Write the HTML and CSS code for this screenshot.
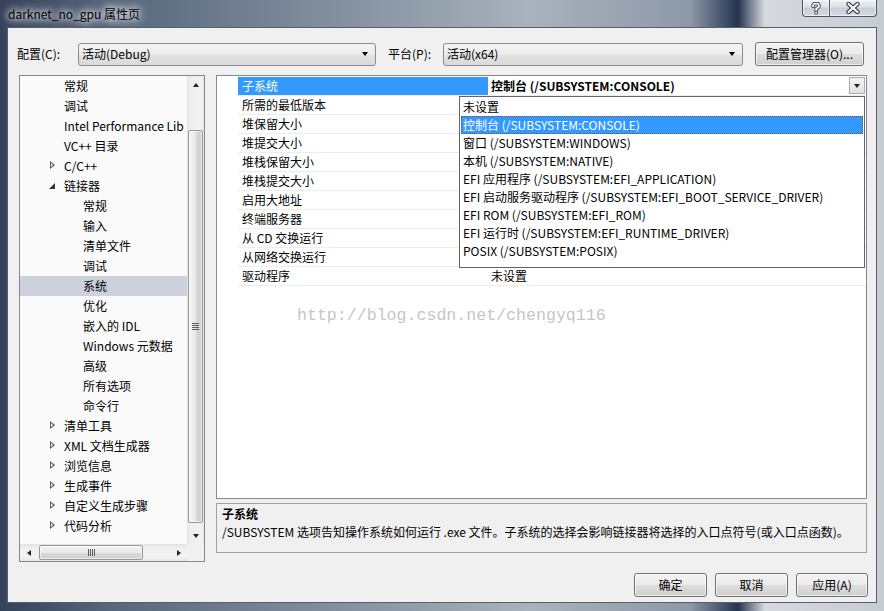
FILE: index.html
```html
<!DOCTYPE html>
<html lang="zh-CN">
<head>
<meta charset="utf-8">
<title>darknet_no_gpu 属性页</title>
<link rel="stylesheet" href="styles.css">
</head>
<body>
<div class="window">
  <div class="titlebar">
    <span class="title">darknet_no_gpu 属性页</span>
    <div class="caption-buttons">
      <button class="cap cap-help" aria-label="帮助">
        <svg width="12" height="13" viewBox="0 0 12 13">
          <path d="M3 4.2 Q3 1.5 6 1.5 Q9 1.5 9 4 Q9 5.6 6.2 6.6 V8.2" fill="none" stroke="#3b4654" stroke-width="3.6" stroke-linecap="round"/>
          <rect x="4.4" y="9.2" width="3.6" height="3.2" rx="0.6" fill="#3b4654"/>
          <path d="M3 4.2 Q3 1.5 6 1.5 Q9 1.5 9 4 Q9 5.6 6.2 6.6 V8.2" fill="none" stroke="#fff" stroke-width="1.7" stroke-linecap="round"/>
          <rect x="5.2" y="10" width="2" height="1.6" fill="#fff"/>
        </svg>
      </button>
      <button class="cap cap-close" aria-label="关闭">
        <svg width="14" height="12" viewBox="0 0 14 12">
          <path d="M2.5 2 L11.5 10 M11.5 2 L2.5 10" stroke="#3b4654" stroke-width="4.4" stroke-linecap="round"/>
          <path d="M2.5 2 L11.5 10 M11.5 2 L2.5 10" stroke="#fff" stroke-width="2.2" stroke-linecap="round"/>
        </svg>
      </button>
    </div>
  </div>

  <div class="client">
    <div class="toolbar">
      <label class="lbl lbl-config">配置(C):</label>
      <div class="combo combo-config"><span class="combo-text">活动(Debug)</span><span class="combo-arrow"></span></div>
      <label class="lbl lbl-platform">平台(P):</label>
      <div class="combo combo-platform"><span class="combo-text">活动(x64)</span><span class="combo-arrow"></span></div>
      <button class="btn btn-manager">配置管理器(O)...</button>
    </div>

    <div class="main">
      <div class="tree">
        <div class="tree-top">
          <ul class="tree-list">
            <li class="node l1"><span class="tw"></span>常规</li>
            <li class="node l1"><span class="tw"></span>调试</li>
            <li class="node l1"><span class="tw"></span>Intel Performance Lib</li>
            <li class="node l1"><span class="tw"></span>VC++ 目录</li>
            <li class="node l1"><span class="tw closed"></span>C/C++</li>
            <li class="node l1"><span class="tw open"></span>链接器</li>
            <li class="node l2">常规</li>
            <li class="node l2">输入</li>
            <li class="node l2">清单文件</li>
            <li class="node l2">调试</li>
            <li class="node l2 selected">系统</li>
            <li class="node l2">优化</li>
            <li class="node l2">嵌入的 IDL</li>
            <li class="node l2">Windows 元数据</li>
            <li class="node l2">高级</li>
            <li class="node l2">所有选项</li>
            <li class="node l2">命令行</li>
            <li class="node l1"><span class="tw closed"></span>清单工具</li>
            <li class="node l1"><span class="tw closed"></span>XML 文档生成器</li>
            <li class="node l1"><span class="tw closed"></span>浏览信息</li>
            <li class="node l1"><span class="tw closed"></span>生成事件</li>
            <li class="node l1"><span class="tw closed"></span>自定义生成步骤</li>
            <li class="node l1"><span class="tw closed"></span>代码分析</li>
          </ul>
          <div class="vscroll">
            <div class="sb-arrow"><span class="arr arr-up"></span></div>
            <div class="vtrack"><div class="vthumb"><span class="grip-h"></span></div></div>
            <div class="sb-arrow"><span class="arr arr-down"></span></div>
          </div>
        </div>
        <div class="tree-bottom">
          <div class="hscroll">
            <div class="sb-arrow-h"><span class="arr arr-left"></span></div>
            <div class="htrack"><div class="hthumb"><span class="grip-v"></span></div></div>
            <div class="sb-arrow-h"><span class="arr arr-right"></span></div>
          </div>
          <div class="sb-corner"></div>
        </div>
      </div>

      <div class="right">
        <div class="grid">
          <div class="prow active"><div class="pname">子系统</div><div class="pval strong"><span class="pval-text">控制台 (/SUBSYSTEM:CONSOLE)</span><span class="ddbtn"><span class="arr arr-down"></span></span></div></div>
          <div class="prow"><div class="pname">所需的最低版本</div><div class="pval"></div></div>
          <div class="prow"><div class="pname">堆保留大小</div><div class="pval"></div></div>
          <div class="prow"><div class="pname">堆提交大小</div><div class="pval"></div></div>
          <div class="prow"><div class="pname">堆栈保留大小</div><div class="pval"></div></div>
          <div class="prow"><div class="pname">堆栈提交大小</div><div class="pval"></div></div>
          <div class="prow"><div class="pname">启用大地址</div><div class="pval"></div></div>
          <div class="prow"><div class="pname">终端服务器</div><div class="pval"></div></div>
          <div class="prow"><div class="pname">从 CD 交换运行</div><div class="pval"></div></div>
          <div class="prow"><div class="pname">从网络交换运行</div><div class="pval"></div></div>
          <div class="prow"><div class="pname">驱动程序</div><div class="pval">未设置</div></div>

          <ul class="dropdown">
            <li>未设置</li>
            <li class="hl">控制台 (/SUBSYSTEM:CONSOLE)</li>
            <li>窗口 (/SUBSYSTEM:WINDOWS)</li>
            <li>本机 (/SUBSYSTEM:NATIVE)</li>
            <li>EFI 应用程序 (/SUBSYSTEM:EFI_APPLICATION)</li>
            <li>EFI 启动服务驱动程序 (/SUBSYSTEM:EFI_BOOT_SERVICE_DRIVER)</li>
            <li>EFI ROM (/SUBSYSTEM:EFI_ROM)</li>
            <li>EFI 运行时 (/SUBSYSTEM:EFI_RUNTIME_DRIVER)</li>
            <li>POSIX (/SUBSYSTEM:POSIX)</li>
          </ul>
        </div>
        <div class="desc">
          <div class="desc-title">子系统</div>
          <div class="desc-text">/SUBSYSTEM 选项告知操作系统如何运行 .exe 文件。子系统的选择会影响链接器将选择的入口点符号(或入口点函数)。</div>
        </div>
      </div>
    </div>

    <div class="footer">
      <button class="btn btn-ok">确定</button>
      <button class="btn btn-cancel">取消</button>
      <button class="btn btn-apply">应用(A)</button>
    </div>
  </div>

  <div class="watermark">http://blog.csdn.net/chengyq116</div>
</div>
</body>
</html>
```

FILE: styles.css
```css
* { box-sizing: border-box; }

html, body {
  margin: 0;
  padding: 0;
}

body {
  width: 884px;
  height: 611px;
  overflow: hidden;
  font-family: "Noto Sans CJK SC", "Noto Sans", sans-serif;
  font-size: 12px;
  color: #000;
}

ul { list-style: none; margin: 0; padding: 0; }
button { font: inherit; color: inherit; }

/* ---- glass frame ---- */
.window {
  position: relative;
  width: 884px;
  height: 611px;
  display: flex;
  flex-direction: column;
  background:
    linear-gradient(to right, #34425a 0, #56657a 12%, #7e8b9b 35%, #a9b2bd 60%, #8e99a8 78%, #25344f 83.5%, #d6d9dd 86.5%, #c7ccd3 100%);
}

.titlebar {
  height: 27px;
  flex: none;
  display: flex;
  align-items: flex-start;
  padding-left: 8px;
}

.title {
  line-height: 27px;
  color: #000;
  text-shadow: 0 0 6px #fff, 0 0 10px rgba(255,255,255,0.9), 0 0 14px rgba(255,255,255,0.7);
}

.caption-buttons {
  margin-left: auto;
  margin-right: 7px;
  display: flex;
}

.cap {
  height: 17px;
  padding: 0;
  border: 1px solid #4b5767;
  border-top: none;
  background: linear-gradient(#eef0f3, #dcdfe4 45%, #c9ced6 50%, #d6dae0);
  display: flex;
  align-items: center;
  justify-content: center;
  box-shadow: inset 0 0 0 1px rgba(255,255,255,0.55);
}
.cap-help { width: 28px; border-radius: 0 0 0 4px; }
.cap-close { width: 47px; border-left: none; border-radius: 0 0 4px 0; }

/* ---- client area ---- */
.client {
  margin: 0 7px 8px 7px;
  height: 576px;
  border: 1px solid #54606e;
  background: #f0f0f0;
  display: flex;
  flex-direction: column;
}

.toolbar {
  margin-top: 14px;
  height: 24px;
  padding-left: 9px;
  display: flex;
  align-items: center;
}

.lbl { white-space: nowrap; padding-bottom: 1px; }
.lbl-config { width: 61px; }
.lbl-platform { width: 55px; margin-left: 12px; }

.combo {
  height: 23px;
  border: 1px solid #8c8c8c;
  border-radius: 3px;
  background: linear-gradient(#f4f4f4, #ececec 50%, #e2e2e2 51%, #dadada);
  display: flex;
  align-items: center;
  padding: 0 7px 1px 3px;
}
.combo-config { width: 298px; }
.combo-platform { width: 300px; }
.combo-text { flex: 1; }
.combo-arrow {
  width: 0; height: 0;
  border-left: 3.5px solid transparent;
  border-right: 3.5px solid transparent;
  border-top: 4px solid #000;
}

.btn {
  height: 24px;
  border: 1px solid #707070;
  border-radius: 3px;
  background: linear-gradient(#f2f2f2, #ebebeb 50%, #dddddd 51%, #cfcfcf);
  box-shadow: inset 0 0 0 1px rgba(255,255,255,0.7);
  padding: 0 0 1px;
  text-align: center;
}
.btn-manager { width: 109px; margin-left: 12px; }

/* ---- main split ---- */
.main {
  margin-top: 9px;
  height: 487px;
  padding-left: 11px;
  display: flex;
}

/* tree */
.tree {
  width: 186px;
  border: 1px solid #828790;
  background: #fafafa;
  display: flex;
  flex-direction: column;
}
.tree-top { flex: 1; display: flex; min-height: 0; }
.tree-list { flex: 1; overflow: hidden; min-width: 0; }

.node {
  height: 20px;
  display: flex;
  align-items: center;
  padding-bottom: 2px;
  white-space: nowrap;
}
.l1 { padding-left: 30px; }
.l2 { padding-left: 63px; }
.node.selected { background: #ccd1dd; }

.tw { width: 14px; height: 18px; flex: none; position: relative; }
.tw.closed::before {
  content: "";
  position: absolute;
  left: 0; top: 5px;
  width: 0; height: 0;
  border-top: 4.5px solid transparent;
  border-bottom: 4.5px solid transparent;
  border-left: 5px solid #5a5a5a;
}
.tw.closed::after {
  content: "";
  position: absolute;
  left: 1px; top: 7px;
  width: 0; height: 0;
  border-top: 2.5px solid transparent;
  border-bottom: 2.5px solid transparent;
  border-left: 2.8px solid #fafafa;
}
.tw.open::before {
  content: "";
  position: absolute;
  left: -1px; top: 7px;
  width: 0; height: 0;
  border-left: 6px solid transparent;
  border-bottom: 6px solid #333;
}

/* scrollbars */
.vscroll {
  width: 17px;
  flex: none;
  display: flex;
  flex-direction: column;
  background: linear-gradient(to right, #e2e2e2, #efefef 20%, #f2f2f2 80%, #e6e6e6);
}
.sb-arrow { height: 17px; display: flex; align-items: center; justify-content: center; }
.vtrack { flex: 1; padding-top: 37px; }
.vthumb {
  margin: 0 1px;
  height: 393px;
  border: 1px solid #979797;
  border-radius: 2px;
  background: linear-gradient(to right, #f4f4f4, #e9e9e9 50%, #d9d9d9 51%, #cfcfcf);
  box-shadow: inset 0 0 0 1px rgba(255,255,255,0.6);
  display: flex;
  align-items: center;
  justify-content: center;
}
.grip-h {
  width: 7px; height: 7px;
  background: repeating-linear-gradient(#5b5b5b 0 1px, transparent 1px 2px);
}

.tree-bottom { height: 17px; display: flex; flex: none; }
.hscroll {
  flex: 1;
  display: flex;
  background: linear-gradient(#e2e2e2, #efefef 20%, #f2f2f2 80%, #e6e6e6);
}
.sb-arrow-h { width: 17px; display: flex; align-items: center; justify-content: center; }
.htrack { flex: 1; padding: 1px 0 1px 2px; }
.hthumb {
  width: 104px;
  height: 100%;
  border: 1px solid #979797;
  border-radius: 2px;
  background: linear-gradient(#f4f4f4, #e9e9e9 50%, #d9d9d9 51%, #cfcfcf);
  box-shadow: inset 0 0 0 1px rgba(255,255,255,0.6);
  display: flex;
  align-items: center;
  justify-content: center;
}
.grip-v {
  width: 7px; height: 7px;
  background: repeating-linear-gradient(to right, #5b5b5b 0 1px, transparent 1px 2px);
}
.sb-corner { width: 17px; background: #f0f0f0; }

.arr { width: 0; height: 0; display: block; flex: none; }
.arr-up { border-left: 3.5px solid transparent; border-right: 3.5px solid transparent; border-bottom: 4px solid #222; }
.arr-down { border-left: 3.5px solid transparent; border-right: 3.5px solid transparent; border-top: 4px solid #222; }
.arr-left { border-top: 3.5px solid transparent; border-bottom: 3.5px solid transparent; border-right: 4px solid #222; }
.arr-right { border-top: 3.5px solid transparent; border-bottom: 3.5px solid transparent; border-left: 4px solid #222; }

/* property grid */
.right {
  margin-left: 11px;
  width: 651px;
  display: flex;
  flex-direction: column;
}

.grid {
  position: relative;
  height: 424px;
  border: 1px solid #828790;
  background: #fff;
  padding-top: 1px;
}

.prow {
  height: 19px;
  display: flex;
  padding-left: 21px;
}
.pname {
  width: 250px;
  line-height: 17px;
  padding-left: 4px;
  border-bottom: 1px solid #ededed;
  white-space: nowrap;
}
.pval {
  flex: 1;
  line-height: 17px;
  padding-left: 3px;
  border-bottom: 1px solid #ededed;
  display: flex;
  white-space: nowrap;
}
.prow.active .pname { background: #3399ff; color: #fff; }
.pval.strong { font-weight: bold; }
.pval-text { flex: 1; }

.ddbtn {
  width: 16px;
  height: 17px;
  margin-right: 1px;
  border: 1px solid #acacac;
  background: linear-gradient(#f2f2f2, #e2e2e2);
  display: flex;
  align-items: center;
  justify-content: center;
}

.dropdown {
  position: absolute;
  left: 242px;
  top: 20px;
  width: 406px;
  height: 172px;
  border: 1px solid #646464;
  background: #fff;
  padding: 1px;
}
.dropdown li {
  height: 18px;
  line-height: 17px;
  padding-left: 2px;
  white-space: nowrap;
}
.dropdown li.hl {
  background: #3399ff;
  color: #fff;
  outline: 1px dotted #7a5a2a;
  outline-offset: -1px;
}

.desc {
  margin-top: 4px;
  height: 50px;
  border: 1px solid #a0a0a0;
  padding: 1px 5px;
  line-height: 18px;
}
.desc-title { font-weight: bold; }

/* footer buttons */
.footer {
  margin-top: 11px;
  height: 24px;
  padding-right: 8px;
  display: flex;
  justify-content: flex-end;
  gap: 8px;
}
.btn-ok, .btn-cancel { width: 73px; }
.btn-apply { width: 72px; }

/* blog stamp over the dialog */
.watermark {
  position: absolute;
  left: 297px;
  top: 306px;
  font-family: "Liberation Mono", monospace;
  font-size: 16.6px;
  line-height: 20px;
  color: #c6c6c6;
  pointer-events: none;
  white-space: nowrap;
}
```
